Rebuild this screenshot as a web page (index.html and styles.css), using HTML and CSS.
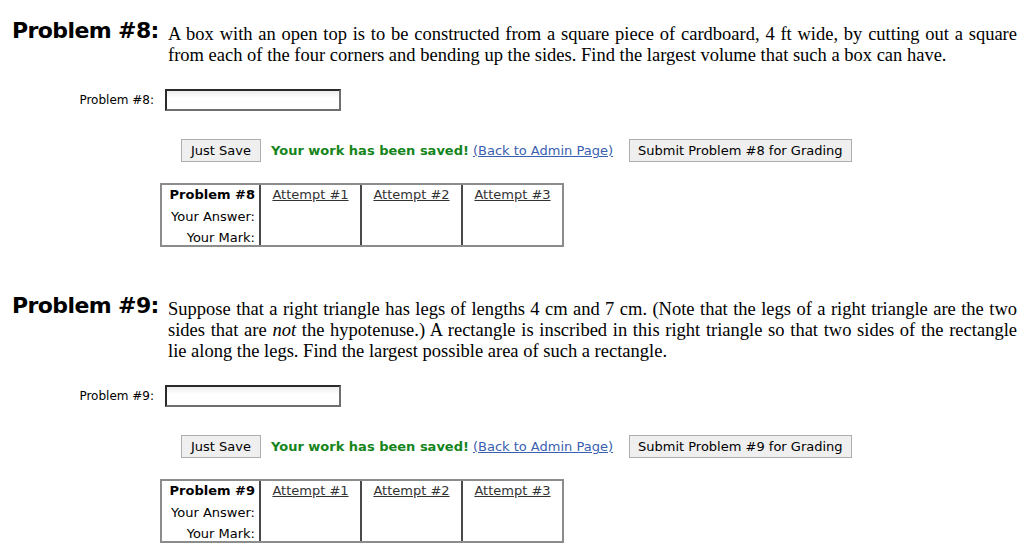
FILE: index.html
```html
<!DOCTYPE html>
<html>
<head>
<meta charset="utf-8">
<link rel="stylesheet" href="styles.css">
</head>
<body>
<div class="problem">
  <div class="prob-head">
    <h2 class="prob-title">Problem #8:</h2>
    <p class="prob-text">A box with an open top is to be constructed from a square piece of cardboard, 4 ft wide, by cutting out a square from each of the four corners and bending up the sides. Find the largest volume that such a box can have.</p>
  </div>
  <div class="answer-row">
    <label class="answer-label">Problem #8:</label>
    <input class="answer-input" type="text">
  </div>
  <div class="action-row">
    <button class="btn">Just Save</button>
    <span class="saved">Your work has been saved!</span>
    <a class="back-link" href="#">(Back to Admin Page)</a>
    <button class="btn btn-submit">Submit Problem #8 for Grading</button>
  </div>
  <table class="attempts">
    <tr>
      <td class="row-head">
        <div class="rh rh-first">Problem #8</div>
        <div class="rh">Your Answer:</div>
        <div class="rh rh-last">Your Mark:</div>
      </td>
      <td class="att"><a href="#">Attempt #1</a></td>
      <td class="att"><a href="#">Attempt #2</a></td>
      <td class="att"><a href="#">Attempt #3</a></td>
    </tr>
  </table>
</div>

<div class="problem">
  <div class="prob-head">
    <h2 class="prob-title">Problem #9:</h2>
    <p class="prob-text">Suppose that a right triangle has legs of lengths 4 cm and 7 cm. (Note that the legs of a right triangle are the two sides that are <em>not</em> the hypotenuse.) A rectangle is inscribed in this right triangle so that two sides of the rectangle lie along the legs. Find the largest possible area of such a rectangle.</p>
  </div>
  <div class="answer-row">
    <label class="answer-label">Problem #9:</label>
    <input class="answer-input" type="text">
  </div>
  <div class="action-row">
    <button class="btn">Just Save</button>
    <span class="saved">Your work has been saved!</span>
    <a class="back-link" href="#">(Back to Admin Page)</a>
    <button class="btn btn-submit">Submit Problem #9 for Grading</button>
  </div>
  <table class="attempts">
    <tr>
      <td class="row-head">
        <div class="rh rh-first">Problem #9</div>
        <div class="rh">Your Answer:</div>
        <div class="rh rh-last">Your Mark:</div>
      </td>
      <td class="att"><a href="#">Attempt #1</a></td>
      <td class="att"><a href="#">Attempt #2</a></td>
      <td class="att"><a href="#">Attempt #3</a></td>
    </tr>
  </table>
</div>
</body>
</html>
```

FILE: styles.css
```css
body {
  margin: 0;
  padding: 18px 7px 0 12px;
  background: #fff;
  color: #000;
  font-family: "DejaVu Sans", Verdana, sans-serif;
}
.problem {
  margin-bottom: 46px;
}
.problem:last-child {
  margin-bottom: 0;
}
.prob-head {
  display: flex;
  align-items: flex-start;
}
.prob-title {
  margin: 0;
  width: 156px;
  flex: none;
  font-size: 22px;
  letter-spacing: -0.6px;
  font-weight: bold;
  line-height: 26px;
}
.prob-text {
  margin: 6px 0 0 0;
  font-family: "Liberation Serif", "Times New Roman", serif;
  font-size: 18.5px;
  line-height: 21px;
  text-align: justify;
}
.answer-row {
  display: flex;
  align-items: center;
  margin-top: 23px;
}
.answer-label {
  width: 142px;
  text-align: right;
  font-size: 12px;
  padding-right: 11px;
  flex: none;
}
.answer-input {
  width: 176px;
  height: 22px;
  box-sizing: border-box;
  margin: 0;
  border: 2px solid;
  border-color: #2a2a2a #6f6f6f #6f6f6f #2a2a2a;
  background: linear-gradient(#ececec, #fff 40%);
}
.action-row {
  display: flex;
  align-items: center;
  margin: 28px 0 0 169px;
  height: 23px;
}
.btn {
  height: 23px;
  padding: 0 9px;
  margin: 0;
  font-family: "DejaVu Sans", Verdana, sans-serif;
  font-size: 13px;
  color: #000;
  background: #efefef;
  border: 1px solid #adadad;
  border-radius: 0;
}
.saved {
  margin-left: 10px;
  color: #15851b;
  font-weight: bold;
  font-size: 13px;
}
.back-link {
  margin-left: 4px;
  font-size: 13px;
  color: #3a5fb0;
}
.btn-submit {
  margin-left: 16px;
  padding: 0 8px;
}
.attempts {
  margin: 21px 0 0 148px;
  width: 404px;
  table-layout: fixed;
  border-collapse: separate;
  border-spacing: 0;
  border: 2px solid #8c8c8c;
  font-size: 13px;
}
.attempts td {
  padding: 0;
  box-sizing: border-box;
}
.row-head {
  width: 97px;
  height: 60px;
  text-align: right;
  padding-right: 4px !important;
  vertical-align: top;
}
.rh {
  height: 21px;
  line-height: 21px;
  white-space: nowrap;
}
.rh-first {
  line-height: 19px;
  font-weight: bold;
}
.rh-last {
  height: 18px;
}
.att {
  width: 101px;
  vertical-align: top;
  text-align: center;
  border-left: 2px solid #4a4a4a;
  line-height: 19px;
}
.att a {
  color: #333;
}
```
